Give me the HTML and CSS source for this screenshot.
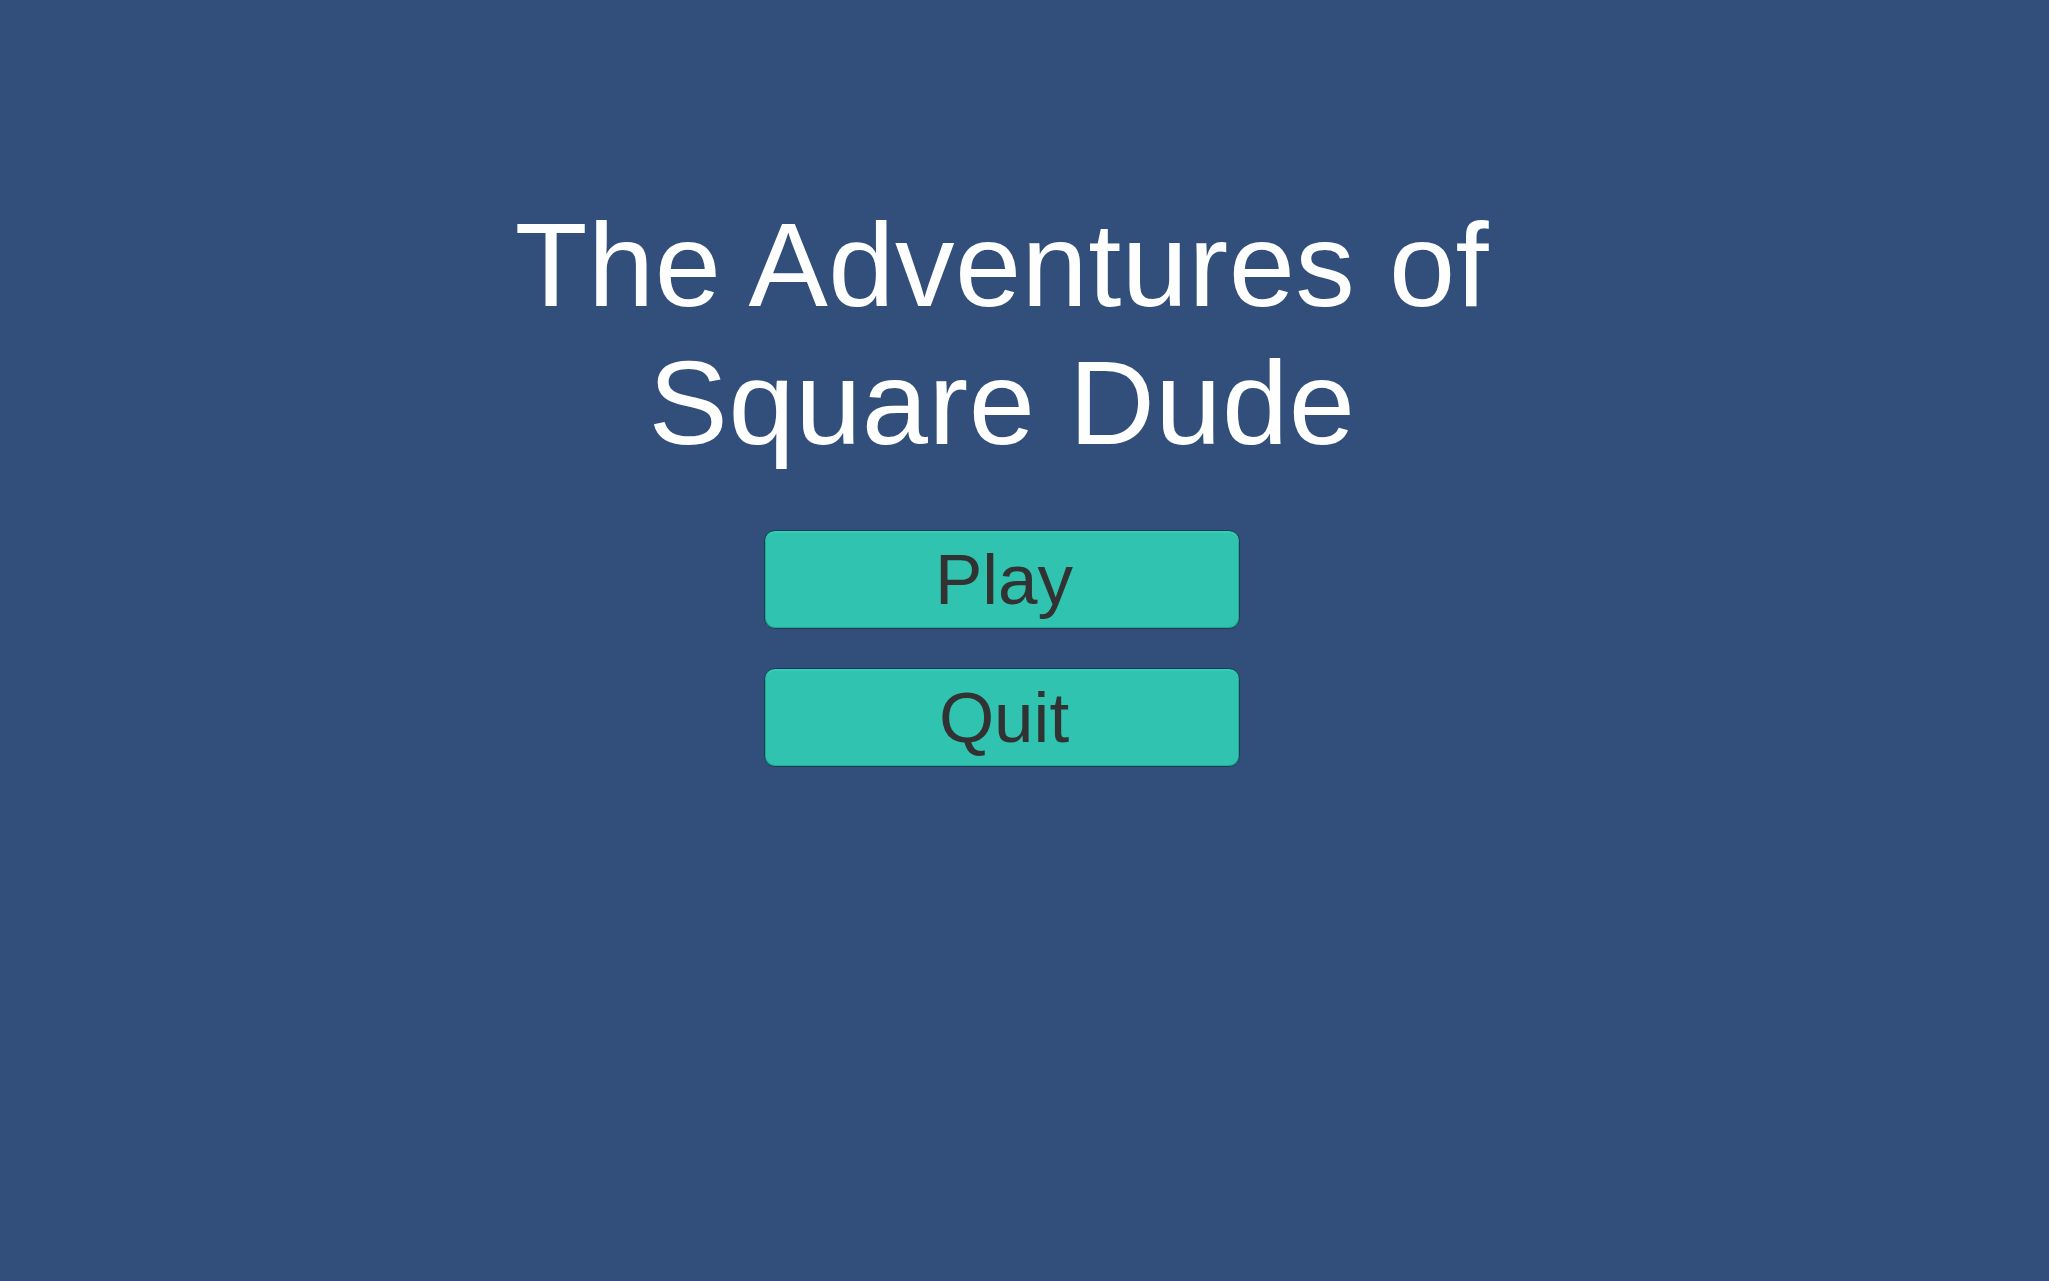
FILE: index.html
```html
<!DOCTYPE html>
<html lang="en">
<head>
<meta charset="utf-8">
<title>The Adventures of Square Dude</title>
<link rel="stylesheet" href="styles.css">
</head>
<body>
  <main class="menu">
    <h1 class="title">The Adventures of<br>Square Dude</h1>
    <div class="actions">
      <button class="btn" type="button">Play</button>
      <button class="btn" type="button">Quit</button>
    </div>
  </main>
</body>
</html>
```

FILE: styles.css
```css
html, body {
  margin: 0;
  padding: 0;
  height: 100%;
}

body {
  background: #314f7a;
  font-family: "Liberation Sans", Arial, sans-serif;
}

.menu {
  display: flex;
  flex-direction: column;
  align-items: center;
  padding: 196px 45px 0 0;
}

.title {
  margin: 0;
  color: #ffffff;
  font-size: 119px;
  font-weight: normal;
  line-height: 138px;
  letter-spacing: 0.5px;
  text-align: center;
}

.actions {
  display: flex;
  flex-direction: column;
  gap: 39px;
  margin-top: 58px;
}

.btn {
  display: flex;
  align-items: center;
  justify-content: center;
  box-sizing: border-box;
  width: 476px;
  height: 99px;
  padding: 0 0 0 4px;
  background: #2fc3b0;
  border: 1px solid #1a3f4d;
  border-radius: 11px;
  box-shadow: inset 0 2px 0 #34cdb9, inset 0 0 0 1px #27a596;
  color: #323232;
  font-family: "Liberation Sans", Arial, sans-serif;
  font-size: 71px;
  cursor: pointer;
}
```
